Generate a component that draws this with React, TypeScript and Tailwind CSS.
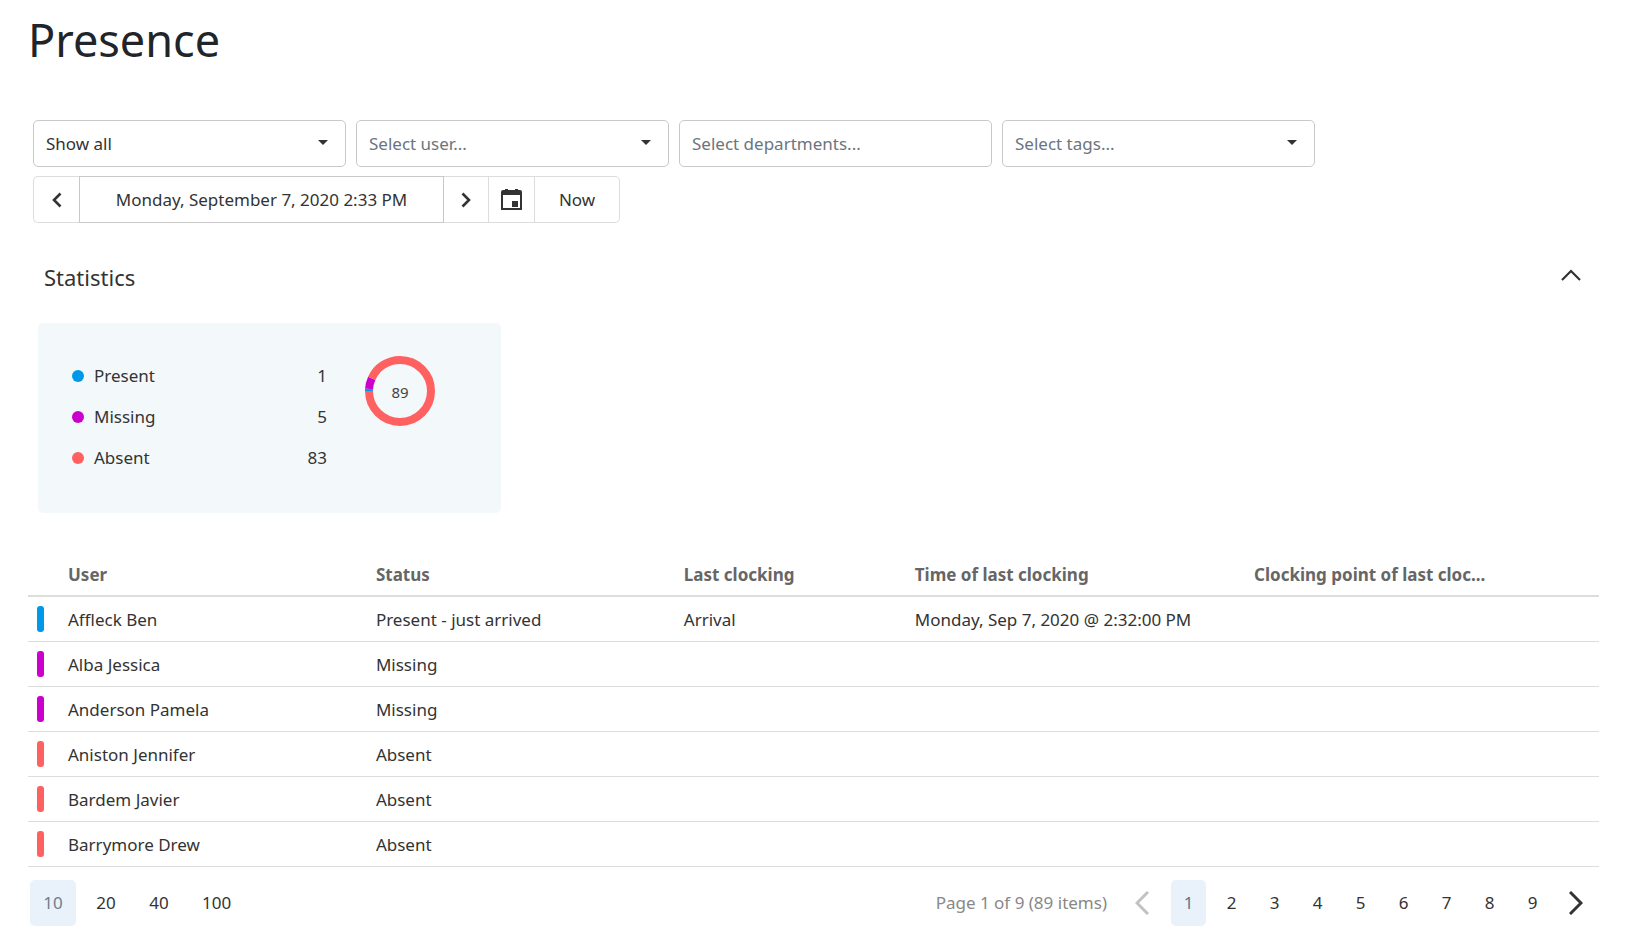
import React, { useState } from "react";
import clsx from "clsx";

const stats = [
  { label: "Present", value: 1, dot: "bg-[#0099e9]", color: "#0099e9" },
  { label: "Missing", value: 5, dot: "bg-[#cc00cc]", color: "#cc00cc" },
  { label: "Absent", value: 83, dot: "bg-[#ff6060]", color: "#ff6060" },
];

const rows = [
  { user: "Affleck Ben", status: "Present - just arrived", last: "Arrival", time: "Monday, Sep 7, 2020 @ 2:32:00 PM", bar: "bg-[#0099e9]" },
  { user: "Alba Jessica", status: "Missing", last: "", time: "", bar: "bg-[#cc00cc]" },
  { user: "Anderson Pamela", status: "Missing", last: "", time: "", bar: "bg-[#cc00cc]" },
  { user: "Aniston Jennifer", status: "Absent", last: "", time: "", bar: "bg-[#ff6060]" },
  { user: "Bardem Javier", status: "Absent", last: "", time: "", bar: "bg-[#ff6060]" },
  { user: "Barrymore Drew", status: "Absent", last: "", time: "", bar: "bg-[#ff6060]" },
];

const pageSizes = [10, 20, 40, 100];
const pages = [1, 2, 3, 4, 5, 6, 7, 8, 9];

function FilterSelect({ label, text, muted }: { label: string; text: string; muted?: boolean }) {
  return (
    <div className="relative w-[313px]">
      <select
        aria-label={label}
        className={clsx(
          "h-[47px] w-full appearance-none rounded-[5px] border border-[#c9c9c9] bg-white pl-3 pr-10",
          muted ? "text-[#6c757d]" : "text-[#333]"
        )}
      >
        <option>{text}</option>
      </select>
      <svg className="pointer-events-none absolute right-[18px] top-5 h-[5px] w-[10px]" viewBox="0 0 10 5" fill="#333">
        <path d="M0 0h10L5 5z" />
      </svg>
    </div>
  );
}

function Donut() {
  const total = stats.reduce((sum, s) => sum + s.value, 0);
  // starts at nine o'clock and runs clockwise
  let offset = 0;
  return (
    <svg className="h-[70px] w-[70px]" viewBox="0 0 70 70">
      <g transform="rotate(180 35 35)" fill="none" strokeWidth="8">
        {stats.map((s) => {
          const start = offset;
          offset += s.value;
          return (
            <circle
              key={s.label}
              cx="35"
              cy="35"
              r="31"
              stroke={s.color}
              pathLength={total}
              strokeDasharray={`${s.value} ${total - s.value}`}
              strokeDashoffset={-start}
            />
          );
        })}
      </g>
      <text x="35" y="42" textAnchor="middle" fontSize="15" fill="#444">
        {total}
      </text>
    </svg>
  );
}

export default function App() {
  const [open, setOpen] = useState(true);
  const [size, setSize] = useState(10);
  const [page, setPage] = useState(1);

  return (
    <div className="bg-white px-7 pb-[10px] font-['Noto_Sans','Open_Sans',sans-serif] text-[17px] leading-6 text-[#333]">
      <h1 className="pt-2 text-[45px] leading-[64px] text-[#212529]">Presence</h1>

      {/* Filters */}
      <div className="mt-12 flex flex-wrap gap-[10px] pl-[5px]">
        <FilterSelect label="Show" text="Show all" />
        <FilterSelect label="User" text="Select user..." muted />
        <input
          type="text"
          aria-label="Departments"
          placeholder="Select departments..."
          className="h-[47px] w-[313px] rounded-[5px] border border-[#c9c9c9] px-3 placeholder:text-[#6c757d]"
        />
        <FilterSelect label="Tags" text="Select tags..." muted />
      </div>

      {/* Date navigation */}
      <div className="mt-[9px] flex pl-[5px]">
        <button aria-label="Previous" className="flex h-[47px] w-[46px] items-center justify-center rounded-l-[5px] border border-r-0 border-[#ddd]">
          <svg className="h-4 w-[10px]" viewBox="0 0 10 16" fill="none" stroke="#333" strokeWidth="2.6">
            <path d="M8.5 1.5L2 8l6.5 6.5" />
          </svg>
        </button>
        <input
          type="text"
          aria-label="Date and time"
          defaultValue="Monday, September 7, 2020 2:33 PM"
          className="h-[47px] w-[365px] border border-[#c9c9c9] text-center"
        />
        <button aria-label="Next" className="flex h-[47px] w-11 items-center justify-center border-y border-[#ddd]">
          <svg className="h-4 w-[10px]" viewBox="0 0 10 16" fill="none" stroke="#333" strokeWidth="2.6">
            <path d="M1.5 1.5L8 8l-6.5 6.5" />
          </svg>
        </button>
        <button aria-label="Open calendar" className="flex h-[47px] w-[47px] items-center justify-center border border-[#ddd]">
          <svg className="h-[21px] w-[21px]" viewBox="0 0 21 21" fill="#333">
            <path fillRule="evenodd" d="M0 3a2 2 0 0 1 2-2h2V0h3v1h7V0h3v1h2a2 2 0 0 1 2 2v18H0zM2 6v13h17V6z" />
            <path d="M11 12h6v6h-6z" />
          </svg>
        </button>
        <button className="h-[47px] w-[85px] rounded-r-[5px] border border-l-0 border-[#ddd]">Now</button>
      </div>

      {/* Statistics */}
      <div className="mt-10 flex items-start justify-between pl-4 pr-[18px]">
        <h2 className="text-[22px] leading-7">Statistics</h2>
        <button aria-label="Toggle statistics" aria-expanded={open} className="pt-[6px]" onClick={() => setOpen(!open)}>
          <svg className="h-3 w-5" viewBox="0 0 20 12" fill="none" stroke="#333" strokeWidth="2.2">
            <path d="M1 11l9-9 9 9" />
          </svg>
        </button>
      </div>
      {open && (
        <div className="ml-[10px] mt-8 flex h-[190px] w-[463px] rounded-[5px] bg-[#f3f8fb] pl-[34px]">
          <ul className="w-[255px] pt-8">
            {stats.map((s) => (
              <li key={s.label} className="flex h-[41px] items-center">
                <span className={clsx("mr-[10px] h-3 w-3 rounded-full", s.dot)} />
                <span>{s.label}</span>
                <span className="ml-auto">{s.value}</span>
              </li>
            ))}
          </ul>
          <div className="pl-[38px] pt-[33px]">
            <Donut />
          </div>
        </div>
      )}

      {/* Users */}
      <table className="mt-10 w-full table-fixed border-collapse text-left">
        <colgroup>
          <col className="w-8" />
          <col className="w-[19.6%]" />
          <col className="w-[19.6%]" />
          <col className="w-[14.7%]" />
          <col className="w-[21.6%]" />
          <col className="w-[17%]" />
          <col />
        </colgroup>
        <thead>
          <tr className="h-[43px] border-b-2 border-[#ddd] text-[#666]">
            <th aria-label="Presence colour" />
            <th className="px-2 pt-[2px]">User</th>
            <th className="px-2 pt-[2px]">Status</th>
            <th className="px-2 pt-[2px]">Last clocking</th>
            <th className="px-2 pt-[2px]">Time of last clocking</th>
            <th className="whitespace-nowrap px-2 pt-[2px]" title="Clocking point of last clocking">
              Clocking point of last cloc...
            </th>
            <th aria-label="Actions" />
          </tr>
        </thead>
        <tbody>
          {rows.map((row) => (
            <tr key={row.user} className="h-[45px] border-b border-[#ddd]">
              <td className="pl-[9px]">
                <div className={clsx("h-[26px] w-[7px] rounded-[3px]", row.bar)} />
              </td>
              <td className="px-2 pt-[2px]">{row.user}</td>
              <td className="px-2 pt-[2px]">{row.status}</td>
              <td className="px-2 pt-[2px]">{row.last}</td>
              <td className="whitespace-nowrap px-2 pt-[2px]">{row.time}</td>
              <td />
              <td />
            </tr>
          ))}
        </tbody>
      </table>

      {/* Pager */}
      <div className="mt-[13px] flex items-center justify-between pl-[2px] pr-4">
        <div className="flex gap-[7px]">
          {pageSizes.map((n) => (
            <button
              key={n}
              onClick={() => setSize(n)}
              className={clsx("h-[46px] min-w-[46px] rounded-[5px] px-[13px]", n === size && "bg-[#e9f2fa] text-[#6d7f8a]")}
            >
              {n}
            </button>
          ))}
        </div>
        <div className="flex items-center">
          <span className="mr-7 text-[#888]">Page {page} of 9 (89 items)</span>
          <button aria-label="Previous page" className="mr-[22px]">
            <svg className="h-6 w-[14px]" viewBox="0 0 14 24" fill="none" stroke="#c2c2c2" strokeWidth="3">
              <path d="M13 1L2 12l11 11" />
            </svg>
          </button>
          <div className="flex gap-2">
            {pages.map((n) => (
              <button
                key={n}
                onClick={() => setPage(n)}
                className={clsx("h-[46px] w-[35px] rounded-[5px]", n === page && "bg-[#e9f2fa] text-[#5f7785]")}
              >
                {n}
              </button>
            ))}
          </div>
          <button aria-label="Next page" className="ml-[19px]">
            <svg className="h-6 w-[14px]" viewBox="0 0 14 24" fill="none" stroke="#333" strokeWidth="3">
              <path d="M1 1l11 11L1 23" />
            </svg>
          </button>
        </div>
      </div>
    </div>
  );
}
